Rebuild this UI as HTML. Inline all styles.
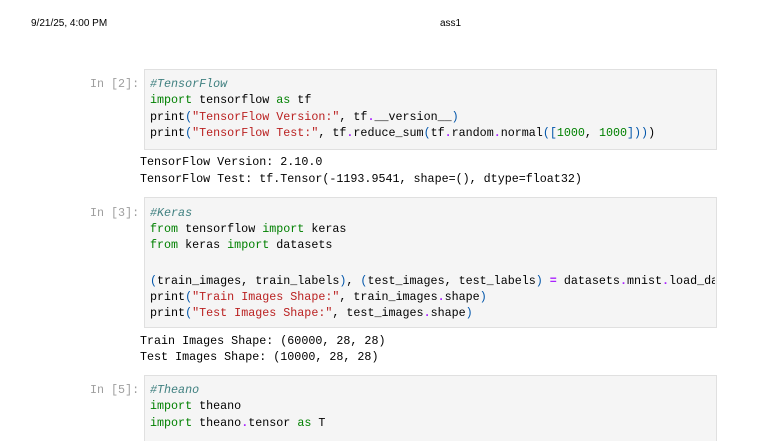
<!DOCTYPE html>
<html><head><meta charset="utf-8"><style>
html,body{margin:0;width:784px;height:441px;background:#fff;position:relative;overflow:hidden;font-family:"Liberation Mono",monospace;}
.h{position:absolute;top:18px;font:10px "Liberation Sans",sans-serif;color:#000;}
.box{position:absolute;left:144px;width:571px;background:#f5f5f5;border:1px solid #e0e0e0;overflow:hidden;}
.l{position:absolute;left:150px;font-size:11.7px;white-space:pre;line-height:14px;color:#000;}
.p{position:absolute;left:90px;font-size:11.7px;color:#9e9e9e;line-height:14px;}
.o{position:absolute;left:140px;font-size:11.7px;white-space:pre;line-height:14px;color:#000;}
.k{color:#008000;}.s{color:#ba2121}.c{color:#408080;font-style:italic}.d{color:#aa22ff;font-weight:bold}.b{color:#0055aa}.n{color:#008000}
</style></head><body>
<div class="h" style="left:31px">9/21/25, 4:00 PM</div>
<div class="h" style="left:440px">ass1</div>

<div class="box" style="top:69px;height:79px"></div>
<div class="p" style="top:77px">In [2]:</div>
<div class="l" style="top:77px"><span class="c">#TensorFlow</span></div>
<div class="l" style="top:93px"><span class="k">import</span> tensorflow <span class="k">as</span> tf</div>
<div class="l" style="top:110px">print<span class="b">(</span><span class="s">"TensorFlow Version:"</span>, tf<span class="d">.</span>__version__<span class="b">)</span></div>
<div class="l" style="top:126px">print<span class="b">(</span><span class="s">"TensorFlow Test:"</span>, tf<span class="d">.</span>reduce_sum<span class="b">(</span>tf<span class="d">.</span>random<span class="d">.</span>normal<span class="b">([</span><span class="n">1000</span>, <span class="n">1000</span><span class="b">]))</span>)</div>
<div class="o" style="top:155px">TensorFlow Version: 2.10.0</div>
<div class="o" style="top:172px">TensorFlow Test: tf.Tensor(-1193.9541, shape=(), dtype=float32)</div>

<div class="box" style="top:197px;height:129px"></div>
<div class="p" style="top:206px">In [3]:</div>
<div class="l" style="top:206px"><span class="c">#Keras</span></div>
<div class="l" style="top:222px"><span class="k">from</span> tensorflow <span class="k">import</span> keras</div>
<div class="l" style="top:238px"><span class="k">from</span> keras <span class="k">import</span> datasets</div>
<div class="l" style="top:274px;width:565px;overflow:hidden"><span class="b">(</span>train_images, train_labels<span class="b">)</span>, <span class="b">(</span>test_images, test_labels<span class="b">)</span> <span class="d">=</span> datasets<span class="d">.</span>mnist<span class="d">.</span>load_data()</div>
<div class="l" style="top:290px">print<span class="b">(</span><span class="s">"Train Images Shape:"</span>, train_images<span class="d">.</span>shape<span class="b">)</span></div>
<div class="l" style="top:306px">print<span class="b">(</span><span class="s">"Test Images Shape:"</span>, test_images<span class="d">.</span>shape<span class="b">)</span></div>
<div class="o" style="top:334px">Train Images Shape: (60000, 28, 28)</div>
<div class="o" style="top:350px">Test Images Shape: (10000, 28, 28)</div>

<div class="box" style="top:375px;height:80px"></div>
<div class="p" style="top:383px">In [5]:</div>
<div class="l" style="top:383px"><span class="c">#Theano</span></div>
<div class="l" style="top:399px"><span class="k">import</span> theano</div>
<div class="l" style="top:416px"><span class="k">import</span> theano<span class="d">.</span>tensor <span class="k">as</span> T</div>
</body></html>
